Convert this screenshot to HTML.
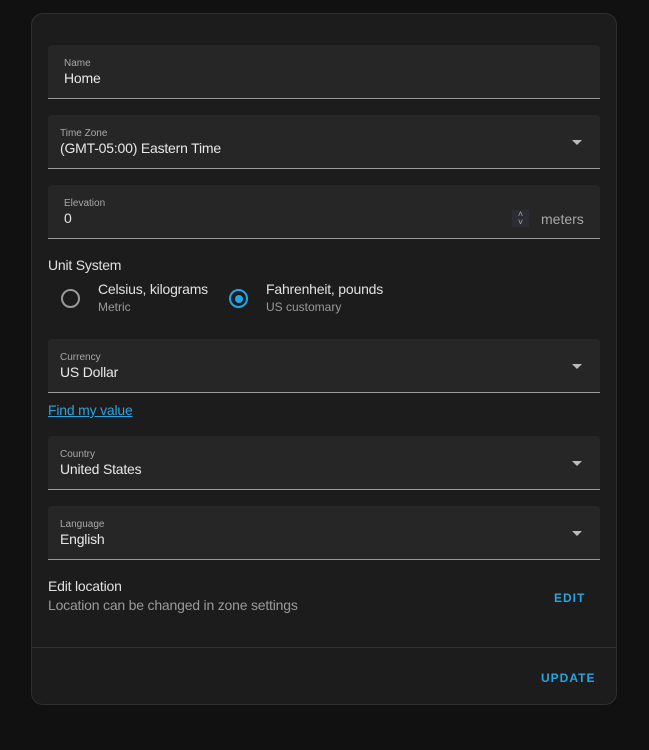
<!DOCTYPE html><html><head><style>
body{margin:0;background:#111;width:649px;height:750px;font-family:"Liberation Sans",sans-serif;color:#e1e1e1;position:relative;overflow:hidden}
.card{position:absolute;left:31px;top:13px;width:586px;height:692px;background:#1c1c1c;border:1px solid #2f2f2f;border-radius:12px;box-sizing:border-box}
.f{position:absolute;left:48px;width:552px;height:53px;background:#262626;border-radius:4px 4px 0 0;border-bottom:1px solid #9a9a9a}
.f .l{position:absolute;left:12px;top:13px;font-size:10px;color:#a8a8a8}
.f .v{position:absolute;left:12px;top:25px;font-size:14px;color:#e8e8e8;letter-spacing:-0.2px}
.f .a{position:absolute;right:18px;top:25px;width:0;height:0;border-left:5px solid transparent;border-right:5px solid transparent;border-top:5px solid #bbb}
.t{position:absolute;font-size:14px;letter-spacing:-0.2px}
.s{position:absolute;font-size:12px;color:#9a9a9a}
.btn{position:absolute;font-size:12px;font-weight:bold;letter-spacing:1px;color:#2aa3e0}
</style></head><body>
<div class="card"></div>
<div class="f" style="top:45px"><div class="l" style="left:16px">Name</div><div class="v" style="left:16px">Home</div></div>
<div class="f" style="top:115px"><div class="l">Time Zone</div><div class="v">(GMT-05:00) Eastern Time</div><div class="a"></div></div>
<div class="f" style="top:185px"><div class="l" style="left:16px">Elevation</div><div class="v" style="left:16px">0</div>
<div style="position:absolute;left:464px;top:25px;width:17px;height:17px;background:#2c2c34;color:#aaa;font-size:9px;line-height:8px;text-align:center">˄<br>˅</div>
<div style="position:absolute;left:493px;top:26px;font-size:14px;color:#a8a8a8">meters</div></div>
<div class="t" style="left:48px;top:257px">Unit System</div>
<div style="position:absolute;left:61px;top:289px;width:19px;height:19px;border:2px solid #9a9a9a;border-radius:50%;box-sizing:border-box"></div>
<div class="t" style="left:98px;top:281px">Celsius, kilograms</div><div class="s" style="left:98px;top:300px">Metric</div>
<div style="position:absolute;left:229px;top:289px;width:19px;height:19px;border:2px solid #1ea8ec;border-radius:50%;box-sizing:border-box"><div style="margin:3.5px;width:8px;height:8px;border-radius:50%;background:#1ea8ec"></div></div>
<div class="t" style="left:266px;top:281px">Fahrenheit, pounds</div><div class="s" style="left:266px;top:300px">US customary</div>
<div class="f" style="top:339px"><div class="l">Currency</div><div class="v">US Dollar</div><div class="a"></div></div>
<div class="t" style="left:48px;top:402px;color:#2aa3e0;text-decoration:underline">Find my value</div>
<div class="f" style="top:436px"><div class="l">Country</div><div class="v">United States</div><div class="a"></div></div>
<div class="f" style="top:506px"><div class="l">Language</div><div class="v">English</div><div class="a"></div></div>
<div class="t" style="left:48px;top:578px">Edit location</div>
<div class="t" style="left:48px;top:597px;color:#9a9a9a">Location can be changed in zone settings</div>
<div class="btn" style="left:554px;top:591px">EDIT</div>
<div style="position:absolute;left:32px;top:647px;width:584px;height:1px;background:#333"></div>
<div class="btn" style="left:541px;top:671px">UPDATE</div>
</body></html>
